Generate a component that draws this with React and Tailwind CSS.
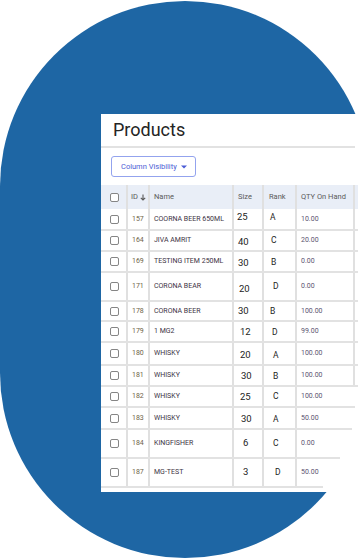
const rows = [
  { id: "157", name: "COORNA BEER 650ML", size: "25", rank: "A", qty: "10.00", h: "h-[22px]", s: "pl-[3px] -translate-y-[2px]", r: "pl-[6px] -translate-y-[2px]", lw: "w-full", end: false },
  { id: "164", name: "JIVA AMRIT", size: "40", rank: "C", qty: "20.00", h: "h-[21px]", s: "pl-[4px] translate-y-[2px]", r: "pl-[7px]", lw: "w-full", end: false },
  { id: "169", name: "TESTING ITEM 250ML", size: "30", rank: "B", qty: "0.00", h: "h-[21px]", s: "pl-[4px] translate-y-[2px]", r: "pl-[7px] translate-y-[1px]", lw: "w-full", end: false },
  { id: "171", name: "CORONA BEAR", size: "20", rank: "D", qty: "0.00", h: "h-[29px]", s: "pl-[5px] translate-y-[3px]", r: "pl-[9px]", lw: "w-full", end: false },
  { id: "178", name: "CORONA BEER", size: "30", rank: "B", qty: "100.00", h: "h-[20px]", s: "pl-[4px]", r: "pl-[6px]", lw: "w-full", end: false },
  { id: "179", name: "1 MG2", size: "12", rank: "D", qty: "99.00", h: "h-[21px]", s: "pl-[6px] translate-y-[1px]", r: "pl-[8px] translate-y-[1px]", lw: "w-full", end: false },
  { id: "180", name: "WHISKY", size: "20", rank: "A", qty: "100.00", h: "h-[23px]", s: "pl-[6px] translate-y-[2px]", r: "pl-[9px] translate-y-[2px]", lw: "w-full", end: false },
  { id: "181", name: "WHISKY", size: "30", rank: "B", qty: "100.00", h: "h-[21px]", s: "pl-[7px] translate-y-[1px]", r: "pl-[9px] translate-y-[1px]", lw: "w-full", end: false },
  { id: "182", name: "WHISKY", size: "25", rank: "C", qty: "100.00", h: "h-[21px]", s: "pl-[6px] translate-y-[1px]", r: "pl-[9px]", lw: "w-[254px]", end: true },
  { id: "183", name: "WHISKY", size: "30", rank: "A", qty: "50.00", h: "h-[22px]", s: "pl-[7px] translate-y-[1px]", r: "pl-[9px] translate-y-[1px]", lw: "w-[251px]", end: true },
  { id: "184", name: "KINGFISHER", size: "6", rank: "C", qty: "0.00", h: "h-[29px]", s: "pl-[9px]", r: "pl-[9px]", lw: "w-[239px]", end: true },
  { id: "187", name: "MG-TEST", size: "3", rank: "D", qty: "50.00", h: "h-[29px]", s: "pl-[9px]", r: "pl-[11px]", lw: "w-[222px]", end: true },
];

function Box() {
  return <div className="w-[9px] h-[9px] rounded-[2px] border-[1.5px] border-[#858585] bg-white" />;
}

export default function App() {
  return (
    <div className="relative w-[358px] h-[560px] overflow-hidden bg-white pl-[101px] pt-[114px] font-['Roboto',sans-serif]">
      <div className="absolute left-0 top-[1px] w-[370px] h-[557px] rounded-full bg-[#1e66a4]" />
      <div className="relative w-[270px] bg-white pb-[4px]">
        <div className="h-[32px] flex items-center pl-[12px] text-[18px] leading-none text-[#242424]">Products</div>
        <div className="w-[254px] h-[2px] bg-[#e2e2e2]" />
        <div className="h-[37px] flex items-center pl-[10px]">
          <div className="h-[21px] w-[85px] border border-[#93a3ee] rounded-[3px] flex items-center pl-[9px] pr-[8px] text-[7.5px] text-[#4b5cd5]">
            <span>Column Visibility</span>
            <svg className="ml-auto" width="6" height="4" viewBox="0 0 6 4"><path d="M0 0.5h6L3 3.5z" fill="#4b5cd5" /></svg>
          </div>
        </div>
        <div className="flex h-[24px] bg-[#e9eef7] text-[7.5px] text-[#5a5a5a]">
          <div className="w-[27px] border-r-2 border-[#e0e0e0] flex items-center pl-[9px]"><Box /></div>
          <div className="w-[22px] border-r-2 border-[#e0e0e0] flex items-center pl-[3px] gap-[2px]">
            <span>ID</span>
            <svg width="6" height="7" viewBox="0 0 6 7"><path d="M3 0.5v5.5M0.8 3.8L3 6 5.2 3.8" stroke="#5a5a5a" strokeWidth="1.1" fill="none" /></svg>
          </div>
          <div className="w-[84px] border-r-2 border-[#e0e0e0] flex items-center pl-[4px]">Name</div>
          <div className="w-[30px] border-r-2 border-[#e0e0e0] flex items-center pl-[4px]">Size</div>
          <div className="w-[33px] border-r-2 border-[#e0e0e0] flex items-center pl-[5px]">Rank</div>
          <div className="w-[58px] border-r-2 border-[#e0e0e0] flex items-center pl-[4px]">QTY On Hand</div>
          <div className="w-[16px]" />
        </div>
        {rows.map((r) => (
          <div key={r.id} className={`flex flex-col ${r.h}`}>
            <div className="flex flex-1 text-[7px]">
              <div className="w-[27px] border-r-2 border-[#e0e0e0] flex items-center pl-[9px]"><Box /></div>
              <div className="w-[22px] border-r-2 border-[#e0e0e0] flex items-center pl-[4px] text-[#6e6347]">{r.id}</div>
              <div className="w-[84px] border-r-2 border-[#e0e0e0] flex items-center pl-[4px] text-[#3d3344]">{r.name}</div>
              <div className="w-[30px] border-r-2 border-[#e0e0e0] flex items-center text-[9.5px] text-[#1c1c1c]"><span className={r.s}>{r.size}</span></div>
              <div className="w-[33px] border-r-2 border-[#e0e0e0] flex items-center text-[8.5px] text-[#1c1c1c]"><span className={r.r}>{r.rank}</span></div>
              <div className={r.end ? "w-[58px] flex items-center pl-[4px] text-[#5b5470]" : "w-[58px] border-r-2 border-[#e0e0e0] flex items-center pl-[4px] text-[#5b5470]"}>{r.qty}</div>
              <div className="w-[16px]" />
            </div>
            <div className={`h-[2px] bg-[#e2e2e2] ${r.lw}`} />
          </div>
        ))}
      </div>
    </div>
  );
}
